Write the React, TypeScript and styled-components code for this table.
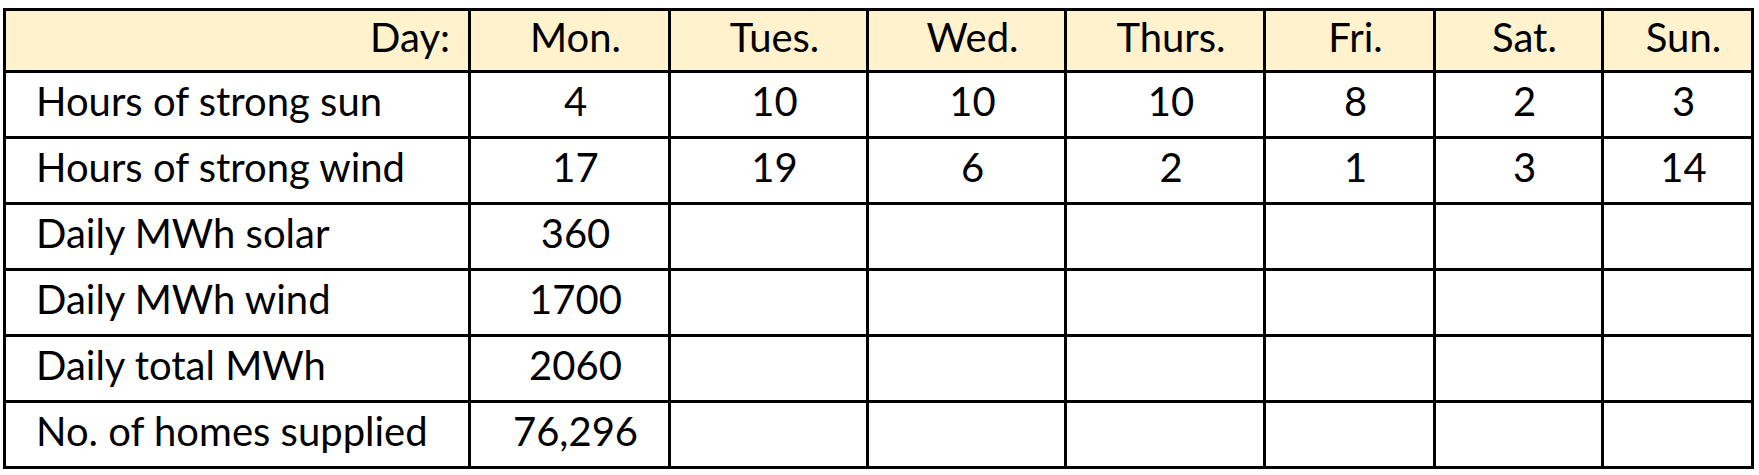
import React from "react";
import styled, { createGlobalStyle } from "styled-components";

const GlobalStyle = createGlobalStyle`
  html, body {
    margin: 0;
    padding: 0;
    background: #ffffff;
  }
`;

const Page = styled.div`
  padding: 8px 0 0 3px;
  font-family: Lato, "Liberation Sans", sans-serif;
  color: #000000;
`;

const Grid = styled.div`
  display: grid;
  grid-template-columns: 462px 197px 195px 195px 196px 167px 165px 147px;
  grid-template-rows: 59px repeat(6, 63px);
  gap: 3px;
  width: max-content;
  background: #000000;
  border: 3px solid #000000;
`;

const Cell = styled.div<{ $head?: boolean; $align?: "left" | "center" | "right" }>`
  display: flex;
  align-items: center;
  justify-content: ${(p) =>
    p.$align === "left" ? "flex-start" : p.$align === "right" ? "flex-end" : "center"};
  padding: 0 18px 7px 30px;
  background: ${(p) => (p.$head ? "#fff2cc" : "#ffffff")};
  font-size: 40px;
  line-height: 1;
  white-space: nowrap;
`;

const days = ["Mon.", "Tues.", "Wed.", "Thurs.", "Fri.", "Sat.", "Sun."];

const rows: { label: string; values: string[] }[] = [
  { label: "Hours of strong sun", values: ["4", "10", "10", "10", "8", "2", "3"] },
  { label: "Hours of strong wind", values: ["17", "19", "6", "2", "1", "3", "14"] },
  { label: "Daily MWh solar", values: ["360", "", "", "", "", "", ""] },
  { label: "Daily MWh wind", values: ["1700", "", "", "", "", "", ""] },
  { label: "Daily total MWh", values: ["2060", "", "", "", "", "", ""] },
  { label: "No. of homes supplied", values: ["76,296", "", "", "", "", "", ""] },
];

export default function App() {
  return (
    <Page>
      <GlobalStyle />
      <Grid>
        <Cell $head $align="right">Day:</Cell>
        {days.map((d) => (
          <Cell key={d} $head>
            {d}
          </Cell>
        ))}
        {rows.map((r) => (
          <React.Fragment key={r.label}>
            <Cell $align="left">{r.label}</Cell>
            {r.values.map((v, i) => (
              <Cell key={i}>{v}</Cell>
            ))}
          </React.Fragment>
        ))}
      </Grid>
    </Page>
  );
}
